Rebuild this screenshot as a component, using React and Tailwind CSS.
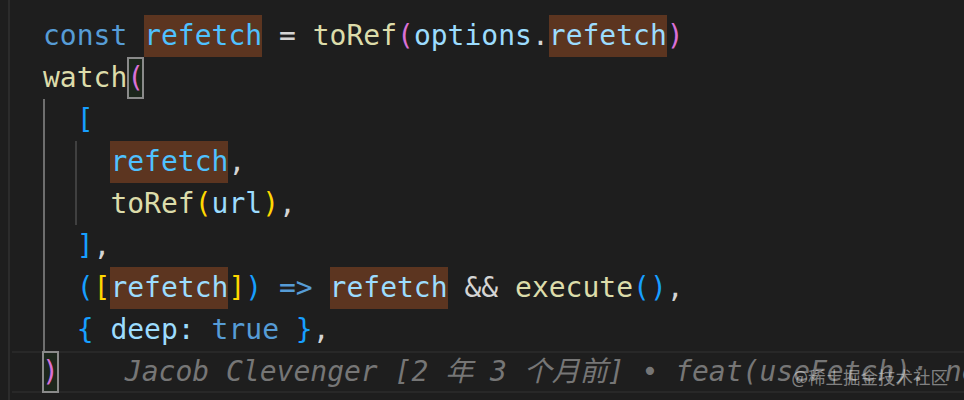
const KW = 'text-[#569cd6]';
const CV = 'text-[#4fc1ff]';
const FN = 'text-[#dcdcaa]';
const VR = 'text-[#9cdcfe]';
const PU = 'text-[#d4d4d4]';
const GOLD = 'text-[#ffd700]';
const PINK = 'text-[#da70d6]';
const BLUE = 'text-[#179fff]';

const T = ({ c, children }) => <span className={c}>{children}</span>;

// word highlight (same symbol occurrences)
const Hl = ({ c, children }) => (
  <span className={`inline-block h-[42px] align-top bg-[#5c3520] ${c}`}>{children}</span>
);

// matching bracket box
const Match = ({ children }) => (
  <span className={`inline-block h-[42px] w-[16.86px] align-top bg-[#1c261c] shadow-[inset_0_0_0_2px_#8a8a8a] ${PINK}`}>
    {children}
  </span>
);

const Line = ({ children, className = '' }) => (
  <div className={`h-[42px] whitespace-pre ${className}`}>{children}</div>
);

export default function App() {
  return (
    <div className="relative h-[400px] w-[964px] overflow-hidden bg-[#1e1e1e] font-['DejaVu_Sans_Mono','Liberation_Mono',monospace] text-[28px] leading-[42px]">
      <div className="ml-[8px] h-full border-l-2 border-[#2c2c2c] pt-[15px]">
        <Line className="pl-[33px]">
          <T c={KW}>const</T> <Hl c={CV}>refetch</Hl> <T c={PU}>=</T> <T c={FN}>toRef</T>
          <T c={PINK}>(</T><T c={VR}>options</T><T c={PU}>.</T><Hl c={VR}>refetch</Hl><T c={PINK}>)</T>
        </Line>
        <Line className="pl-[33px]">
          <T c={FN}>watch</T><Match>(</Match>
        </Line>

        <div className="ml-[33px] border-l-2 border-[#6e6e6e] pl-[31.7px]">
          <Line><T c={BLUE}>[</T></Line>
          <div className="ml-[-1.7px] border-l-2 border-[#404040] pl-[33.4px]">
            <Line><Hl c={CV}>refetch</Hl><T c={PU}>,</T></Line>
            <Line>
              <T c={FN}>toRef</T><T c={GOLD}>(</T><T c={VR}>url</T><T c={GOLD}>)</T><T c={PU}>,</T>
            </Line>
          </div>
          <Line><T c={BLUE}>]</T><T c={PU}>,</T></Line>
          <Line>
            <T c={BLUE}>(</T><T c={GOLD}>[</T><Hl c={VR}>refetch</Hl><T c={GOLD}>]</T><T c={BLUE}>)</T>{' '}
            <T c={KW}>=&gt;</T> <Hl c={VR}>refetch</Hl> <T c={PU}>&amp;&amp;</T> <T c={FN}>execute</T>
            <T c={BLUE}>()</T><T c={PU}>,</T>
          </Line>
          <Line>
            <T c={BLUE}>{'{'}</T> <T c={VR}>deep:</T> <T c={KW}>true</T> <T c={BLUE}>{'}'}</T><T c={PU}>,</T>
          </Line>
        </div>

        {/* current line */}
        <div className="ml-[2px] flex h-[42px] whitespace-pre shadow-[inset_0_2px_0_#282828,inset_0_-2px_0_#282828]">
          <span className="ml-[30px] inline-flex h-[42px] w-[17px] justify-center bg-[#1c261c] text-[#da70d6] shadow-[inset_0_0_0_2px_#8a8a8a]">
            )
          </span>
          <span className="ml-[66px] italic text-[#767676] font-['DejaVu_Sans_Mono','Noto_Sans_CJK_SC',monospace]">
            Jacob Clevenger [2 年 3 个月前] • feat(useFetch): new
          </span>
        </div>
      </div>

      <div className="absolute bottom-[15px] right-[16px] font-['Noto_Sans_CJK_SC',sans-serif] text-[17.5px] leading-none text-white/45">
        @稀土掘金技术社区
      </div>
    </div>
  );
}
